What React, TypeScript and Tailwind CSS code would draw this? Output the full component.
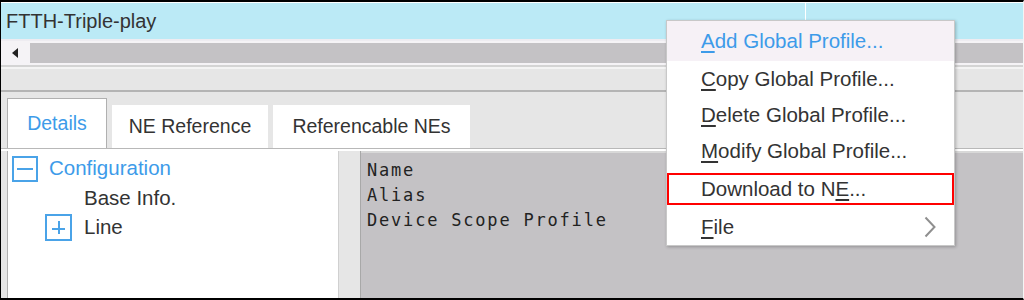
function Mn({ children }: { children: string }) {
  return <span className="underline underline-offset-[3px] decoration-[1.5px]">{children}</span>;
}

export default function App() {
  const items = [
    { pre: '', key: 'C', post: 'opy Global Profile...' },
    { pre: '', key: 'D', post: 'elete Global Profile...' },
    { pre: '', key: 'M', post: 'odify Global Profile...' },
  ];

  return (
    <div className="relative w-[1024px] h-[300px] overflow-hidden bg-[#e6e6e6] border-t-2 border-b-2 border-l border-black border-r border-r-[#f4f4f4] font-['Liberation_Sans',Arial,sans-serif] text-[#333]">
      <div className="flex flex-col h-full">
        {/* title bar */}
        <div className="h-[37px] bg-[#bbeaf6] border-t border-white flex items-center pl-[5px] text-[20px] leading-none">
          <span className="flex-1">FTTH-Triple-play</span>
          <div className="w-px self-stretch bg-white mr-[217px]" />
        </div>
        {/* scroll row */}
        <div className="h-[26px] bg-[#f5f3f6] border-t-2 border-[#eeecf1] flex items-center pl-[11px] pr-0">
          <div className="w-0 h-0 border-y-[5px] border-y-transparent border-r-[6px] border-r-[#222] mr-[12px]" />
          <div className="flex-1 h-[20px] bg-[#c4c2c5]" />
        </div>
        {/* toolbar band */}
        <div className="h-[27px] border-t-2 border-[#d4d4d4] border-b-2 border-b-[#b4b4b4] bg-[#e6e6e6] shadow-[inset_0_2px_0_#f4f4f4]" />
        {/* tabs */}
        <div className="h-[57px] flex items-end pl-[6px] gap-[5px] border-b border-[#b8b8b8] text-[19.5px]">
          <div className="w-[100px] h-[50px] bg-white border-l border-t border-r border-[#b0b0b0] flex items-center justify-center text-[#3d9be9]">
            Details
          </div>
          <div className="w-[156px] h-[43px] bg-white flex items-center justify-center">NE Reference</div>
          <div className="w-[197px] h-[43px] bg-white flex items-center justify-center">Referencable NEs</div>
        </div>
        {/* content */}
        <div className="flex-1 flex border-t-2 border-white pl-[6px]">
          <div className="w-[332px] bg-white border-l border-[#b0b0b0] border-r border-r-[#d0d0d0] pt-[4px] text-[20.5px] leading-none">
            <div className="flex items-center h-[27px] pl-[4px]">
              <div className="w-[26px] h-[26px] border-2 border-[#4aa3e8] flex items-center justify-center">
                <div className="w-[16px] h-[2px] bg-[#4aa3e8]" />
              </div>
              <span className="ml-[11px] text-[#3d9be9]">Configuration</span>
            </div>
            <div className="h-[29px] flex items-center pl-[76px] mt-[2px]">Base Info.</div>
            <div className="flex items-center h-[29px] pl-[37px]">
              <div className="w-[27px] h-[27px] border-2 border-[#4aa3e8] relative">
                <div className="absolute left-[5px] top-[11.5px] w-[13px] h-[2px] bg-[#4aa3e8]" />
                <div className="absolute top-[5px] left-[10.5px] h-[13px] w-[2px] bg-[#4aa3e8]" />
              </div>
              <span className="ml-[12px]">Line</span>
            </div>
          </div>
          <div className="w-[22px] bg-[#e6e6e6] border-r border-[#a8a8a8]" />
          <div className="flex-1 bg-[#c4c2c5] border-t-2 border-[#d8d8d8] pl-[6px] pt-[5px] font-['DejaVu_Sans_Mono',monospace] text-[17px] tracking-[1.8px] leading-[25px] text-[#222]">
            <div>Name</div>
            <div>Alias</div>
            <div>Device Scope Profile</div>
          </div>
        </div>
      </div>

      {/* context menu */}
      <div className="absolute left-[665px] top-[18px] w-[289px] bg-white border border-[#c8c8c8] shadow-[1px_1px_3px_rgba(0,0,0,0.25)] text-[20.5px] leading-none">
        <div className="flex items-center pl-[34px] h-[40px] bg-[#f6f1f6] text-[#3d9be9]">
          <Mn>A</Mn>dd Global Profile...
        </div>
        {items.map((it, i) => (
          <div key={i} className="flex items-center pl-[34px] h-[36px]">
            <Mn>{it.key}</Mn>
            {it.post}
          </div>
        ))}
        <div className="flex items-center h-[32px] mt-[4px] pl-[32px] border-2 border-[#ff0000]">
          Download to N<Mn>E</Mn>...
        </div>
        <div className="flex items-center h-[40px] pl-[34px] pr-[18px] pt-[4px]">
          <span className="flex-1">
            <Mn>F</Mn>ile
          </span>
          <svg width="12" height="22" viewBox="0 0 12 22" fill="none">
            <path d="M1.5 1.5 L10.5 11 L1.5 20.5" stroke="#8f8f8f" strokeWidth="2" />
          </svg>
        </div>
      </div>
    </div>
  );
}
